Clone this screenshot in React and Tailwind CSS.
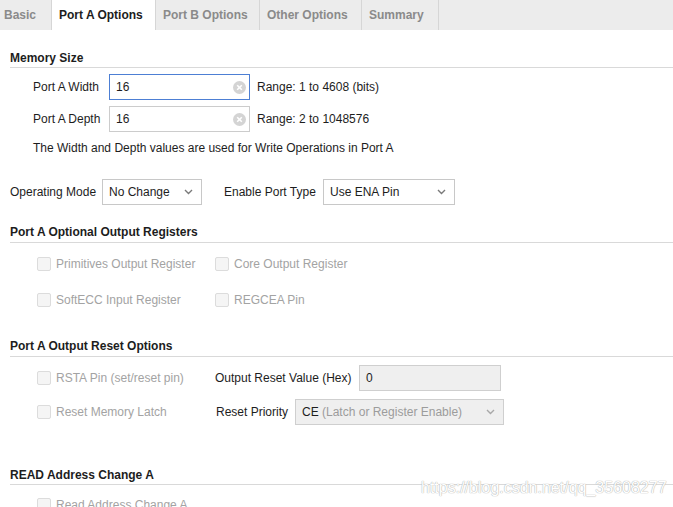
import { useState } from 'react'

const tabs = [
    { label: 'Basic', w: 'w-[51px]' },
    { label: 'Port A Options', w: 'w-[104px]' },
    { label: 'Port B Options', w: 'w-[104px]' },
    { label: 'Other Options', w: 'w-[102px]' },
    { label: 'Summary', w: 'w-[77px]' },
]

function Chevron({ color = '#7a7a7a' }) {
    return (
        <svg width="9" height="6" viewBox="0 0 9 6" fill="none">
            <polyline points="1,1 4.5,4.5 8,1" stroke={color} strokeWidth="1.4" />
        </svg>
    )
}

function ClearIcon() {
    return (
        <svg width="13" height="13" viewBox="0 0 13 13">
            <circle cx="6.5" cy="6.5" r="6.5" fill="#d4d4d4" />
            <path d="M4.2 4.2 L8.8 8.8 M8.8 4.2 L4.2 8.8" stroke="#fff" strokeWidth="1.6" />
        </svg>
    )
}

function Heading({ children, className = '', pb = 'pb-[1px]' }) {
    return (
        <div className={`ml-[10px] border-b border-[#d9d9d9] ${pb} ${className}`}>
            <span className="block leading-[16px] font-bold text-[#1d1d1d]">{children}</span>
        </div>
    )
}

function Checkbox({ label, width = '' }) {
    return (
        <div className={`flex items-center gap-[5px] h-[20px] ${width}`}>
            <span className="w-[14px] h-[14px] rounded-[2px] border border-[#dcdcdc] bg-[#f5f5f5]" />
            <span className="text-[#a3a3a3]">{label}</span>
        </div>
    )
}

function TextInput({ value, focused }) {
    return (
        <div
            className={`w-[141px] h-[26px] flex items-center justify-between pl-[6px] pr-[3px] border ${
                focused ? 'border-[#4d7fd4]' : 'border-[#cccccc]'
            }`}
        >
            <span className="text-[#1d1d1d]">{value}</span>
            <ClearIcon />
        </div>
    )
}

function Select({ value, width }) {
    return (
        <div className={`${width} h-[26px] flex items-center justify-between pl-[6px] pr-[8px] border border-[#c8c8c8] bg-white`}>
            <span className="text-[#1d1d1d]">{value}</span>
            <Chevron />
        </div>
    )
}

function App() {
    const [active, setActive] = useState(1)

    return (
        <div
            className="relative w-full h-[507px] overflow-hidden bg-white text-[12px] text-[#1d1d1d]"
            style={{ fontFamily: '"Liberation Sans", Arial, sans-serif' }}
        >
            {/* Tab bar */}
            <div className="flex h-[30px] bg-[#ececec]">
                {tabs.map((t, i) => (
                    <button
                        key={t.label}
                        onClick={() => setActive(i)}
                        className={`${t.w} h-full text-left font-bold ${i === 0 ? 'pl-[4px]' : 'pl-[7px] border-l border-[#d6d6d6]'} ${
                            active === i ? 'bg-white text-[#1d1d1d]' : 'text-[#8a8a8a]'
                        }`}
                    >
                        {t.label}
                    </button>
                ))}
                <div className="flex-1 border-l border-[#d6d6d6]" />
            </div>

            {/* Memory Size */}
            <Heading className="mt-[20px]">Memory Size</Heading>
            <div className="mt-[6px] flex items-center pl-[33px]">
                <span className="w-[76px]">Port A Width</span>
                <TextInput value="16" focused />
                <span className="ml-[7px]">Range: 1 to 4608 (bits)</span>
            </div>
            <div className="mt-[6px] flex items-center pl-[33px]">
                <span className="w-[76px]">Port A Depth</span>
                <TextInput value="16" />
                <span className="ml-[7px]">Range: 2 to 1048576</span>
            </div>
            <p className="mt-[8px] pl-[33px] leading-[16px]">
                The Width and Depth values are used for Write Operations in Port A
            </p>

            <div className="mt-[23px] flex items-center pl-[10px]">
                <span className="w-[92px]">Operating Mode</span>
                <Select value="No Change" width="w-[100px]" />
                <span className="ml-[22px] w-[99px]">Enable Port Type</span>
                <Select value="Use ENA Pin" width="w-[132px]" />
            </div>

            {/* Optional output registers */}
            <Heading className="mt-[19px]" pb="pb-[2px]">Port A Optional Output Registers</Heading>
            <div className="mt-[11px] flex pl-[37px]">
                <Checkbox label="Primitives Output Register" width="w-[178px]" />
                <Checkbox label="Core Output Register" />
            </div>
            <div className="mt-[16px] flex pl-[37px]">
                <Checkbox label="SoftECC Input Register" width="w-[178px]" />
                <Checkbox label="REGCEA Pin" />
            </div>

            {/* Output reset options */}
            <Heading className="mt-[28px]" pb="pb-[2px]">Port A Output Reset Options</Heading>
            <div className="mt-[8px] flex items-center pl-[37px] h-[26px]">
                <Checkbox label="RSTA Pin (set/reset pin)" width="w-[178px]" />
                <span className="w-[144px]">Output Reset Value (Hex)</span>
                <div className="w-[142px] h-[26px] flex items-center pl-[6px] border border-[#cfcfcf] bg-[#efefef]">
                    0
                </div>
            </div>
            <div className="mt-[8px] flex items-center pl-[37px] h-[26px]">
                <Checkbox label="Reset Memory Latch" width="w-[179px]" />
                <span className="w-[79px]">Reset Priority</span>
                <div className="w-[209px] h-[26px] flex items-center justify-between pl-[6px] pr-[8px] border border-[#cfcfcf] bg-[#efefef]">
                    <span>
                        CE <span className="text-[#9c9c9c]">(Latch or Register Enable)</span>
                    </span>
                    <Chevron color="#a8a8a8" />
                </div>
            </div>

            {/* READ address change */}
            <Heading className="mt-[42px]">READ Address Change A</Heading>
            <div className="mt-[10px] flex pl-[37px]">
                <Checkbox label="Read Address Change A" />
            </div>

            {/* watermark */}
            <div className="absolute left-[421px] top-[479px] text-[16px] leading-[18px] text-white [text-shadow:0_0_1px_#b0b0b0,0_0_1px_#b0b0b0]">
                https://blog.csdn.net/qq_35608277
            </div>
        </div>
    )
}

export default App
